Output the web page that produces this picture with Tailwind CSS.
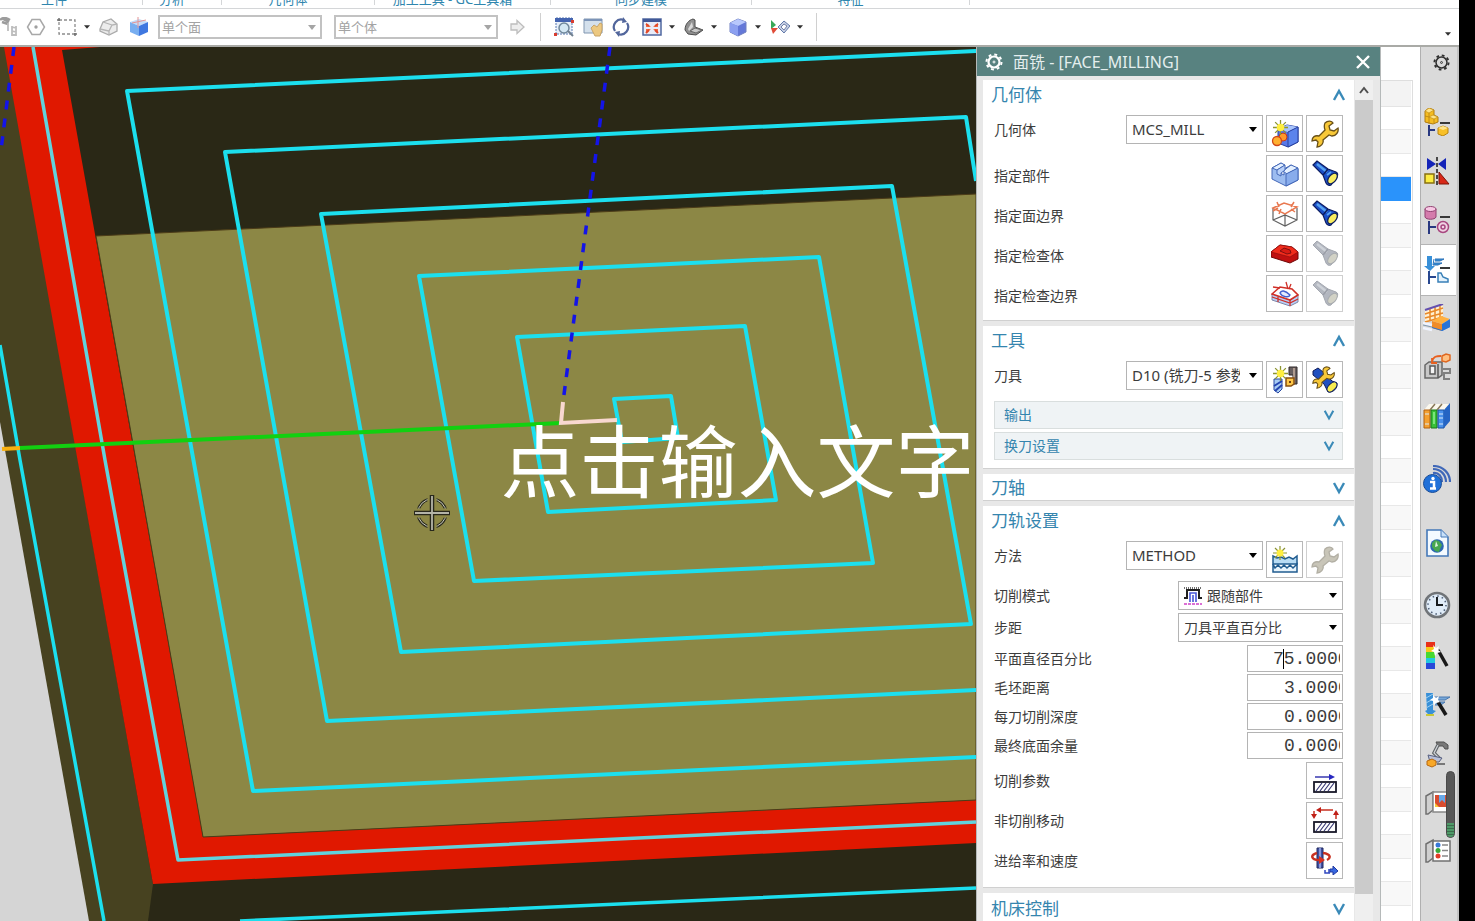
<!DOCTYPE html>
<html lang="zh-CN">
<head>
<meta charset="utf-8">
<title>面铣 - [FACE_MILLING]</title>
<script src="https://cdn.jsdelivr.net/npm/@tailwindcss/browser@4"></script>
</head>
<body class="relative flex h-screen overflow-hidden bg-black pr-4 font-['Noto_Sans','Noto_Sans_CJK_SC',sans-serif] text-sm text-[#3c3c3c]">

<svg class="hidden" aria-hidden="true">
  <symbol id="up" viewBox="0 0 14 14"><path d="M2 12 7 3l5 9" fill="none" stroke="#3a8ab8" stroke-width="2.4"/></symbol>
  <symbol id="down" viewBox="0 0 14 14"><path d="M2 2l5 9 5-9" fill="none" stroke="#3a8ab8" stroke-width="2.4"/></symbol>
  <symbol id="caret" viewBox="0 0 10 6"><path d="M0 0h10L5 6z" fill="currentColor"/></symbol>
  <symbol id="torch" viewBox="0 0 28 28">
    <path d="M2 5 6 1l11 8 8 3c2 1 2 3 1 5l-6 8c-2 1-4 0-5-2l-3-8z" fill="#1c50c8" stroke="#0c1c60" stroke-width="1.200"/>
    <path d="M6 4l10 8" stroke="#58a4f0" stroke-width="2.400"/>
    <path d="M12 15l5-6" stroke="#0c1c60" stroke-width="1.500"/>
    <path d="M16 15l4-3" stroke="#58a4f0" stroke-width="1.800"/>
    <ellipse cx="21.500" cy="18.500" rx="3.600" ry="6.200" transform="rotate(40 21.500 18.500)" fill="#f8ec60" stroke="#10205c" stroke-width="1.300"/>
  </symbol>
  <symbol id="torch-off" viewBox="0 0 28 28">
    <path d="M2 5 6 1l11 8 8 3c2 1 2 3 1 5l-6 8c-2 1-4 0-5-2l-3-8z" fill="#b3b7c0" stroke="#a4a8b0"/>
    <path d="M6 4l10 8" stroke="#ced2d8" stroke-width="2.400"/>
    <path d="M12 15l5-6" stroke="#9a9ea8" stroke-width="1.500"/>
    <ellipse cx="21.500" cy="18.500" rx="3.600" ry="6.200" transform="rotate(40 21.500 18.500)" fill="#d2d2c6" stroke="#a8acb0"/>
  </symbol>
  <symbol id="wrench" viewBox="0 0 28 28">
    <path d="M14 3c3-3 7-2 8 0l-4 3 1 4 4 1 4-3c1 4-2 8-6 8l-3-1-6 5c1 3-2 7-6 7l1-5-2-2-4 1c0-4 3-6 7-5l6-6c-1-3-1-5 0-7z" stroke-width="1.300"/>
  </symbol>
  <symbol id="spark" viewBox="0 0 14 14">
    <path d="M7 0v14M0 7h14M2 2l10 10M12 2 2 12" stroke="#8c9430" stroke-width="1.200"/><circle cx="7" cy="7" r="3.500" fill="#ffee40"/>
  </symbol>
  <symbol id="hatch" viewBox="0 0 24 12">
    <rect x="1" y="1" width="22" height="10" fill="#fff" stroke="#181828" stroke-width="1.800"/>
    <path d="M3 10l6-8M7 10l6-8M11 10l6-8M15 10l6-8" stroke="#3c3c78" stroke-width="1.200"/>
  </symbol>
</svg>

<div class="flex min-w-0 flex-1 flex-col bg-white">

  <!-- Ribbon group captions -->
  <div class="flex h-[9px] shrink-0 items-end overflow-hidden border-b border-[#d4d6d8] pb-[3px] text-[13px] leading-3 text-[#2f86ae]">
    <span class="w-[143px] border-r border-[#d4d6d8] pr-[34px] text-center">工件</span>
    <span class="w-[79px] border-r border-[#d4d6d8] pr-5 text-center">分析</span>
    <span class="w-[153px] border-r border-[#d4d6d8] pr-5 text-center">几何体</span>
    <span class="w-[176px] border-r border-[#d4d6d8] pr-5 text-center">加工工具 - GC工具箱</span>
    <span class="w-[201px] border-r border-[#d4d6d8] pr-5 text-center">同步建模</span>
    <span class="w-[218px] border-r border-[#d4d6d8] pr-5 text-center">特征</span>
  </div>

  <!-- Selection and view toolbar -->
  <div class="flex h-[38px] shrink-0 items-center border-b-2 border-[#a9aaa6] text-[#303030]">
    <button aria-label="装配" class="h-5 w-5"><svg viewBox="0 0 20 20"><path d="M0 3c3-3 7-2 10 0M2 5l6 2M3 2l6 3" fill="none" stroke="#9c9c9c" stroke-width="2.400"/><path d="M8 6v8M12 9v10M16 9v10M12 10l4 1M12 14l4 1M12 18h4" fill="none" stroke="#bdbdbd" stroke-width="1.800"/></svg></button>
    <button aria-label="圆心" class="ml-1.5 h-5 w-5"><svg viewBox="0 0 20 20"><path d="M6 2.500h8l4.500 7.500-4.500 7.500H6L1.500 10z" fill="none" stroke="#a8a8a8" stroke-width="1.500"/><circle cx="10" cy="10" r="1.700" fill="#a0a0a0"/></svg></button>
    <button aria-label="框选" class="ml-[11px] h-5 w-5"><svg viewBox="0 0 20 20"><path d="M2 3h16v14H2z" fill="none" stroke="#8c8c8c" stroke-width="1.300" stroke-dasharray="3 2"/><path d="M0 3h3M17 17h3M2 1v3M18 16v3" stroke="#707070" stroke-width="1.500"/></svg></button>
    <button aria-label="框选选项" class="ml-1 w-3"><svg class="mx-auto h-1 w-1.5"><use href="#caret"/></svg></button>
    <button aria-label="实体" class="ml-1.5 h-5 w-5"><svg viewBox="0 0 20 20"><path d="M1 12l3-7 8-3 6 5v7l-8 4-9-4z" fill="#ececec" stroke="#aaa" stroke-width="1.300"/><path d="M1 12l9 2v4M10 14l3-6 5-1M4 5l9 3" fill="none" stroke="#b4b4b4" stroke-width="1.300"/></svg></button>
    <button aria-label="着色体" class="ml-2.5 h-5 w-5"><svg viewBox="0 0 20 20"><path d="M1 5l9-3 9 3-9 4z" fill="#c4dcf8"/><path d="M1 5l9 4v10l-9-4z" fill="#78aef0"/><path d="M10 9l9-4v10l-9 4z" fill="#3f78e0"/><path d="M9 0v11M3 6l14-3" stroke="#e49494"/></svg></button>
    <div class="relative ml-[9px] w-[164px]">
      <select aria-label="面规则" class="block h-6 w-full appearance-none border-2 border-[#c2c2c2] bg-white pl-0.5 text-[13px] leading-5 text-[#a3a3a3]"><option>单个面</option></select>
      <svg class="pointer-events-none absolute top-2.5 right-1.5 h-[5px] w-2 text-[#a5a5a5]"><use href="#caret"/></svg>
    </div>
    <div class="relative ml-3 w-[164px]">
      <select aria-label="体规则" class="block h-6 w-full appearance-none border-2 border-[#c2c2c2] bg-white pl-0.5 text-[13px] leading-5 text-[#a3a3a3]"><option>单个体</option></select>
      <svg class="pointer-events-none absolute top-2.5 right-1.5 h-[5px] w-2 text-[#a5a5a5]"><use href="#caret"/></svg>
    </div>
    <button aria-label="前进" class="ml-2.5 h-5 w-5"><svg viewBox="0 0 20 20"><path d="M3 7h6V3.500L16 10l-7 6.500V13H3z" fill="#eee" stroke="#bdbdbd" stroke-width="1.300"/></svg></button>
    <div class="ml-3 h-7 w-px bg-[#d0d0d0]"></div>
    <button aria-label="适合窗口" class="ml-[13px] h-5 w-5"><svg viewBox="0 0 20 20"><path d="M2 1h16v16H2z" fill="#e8f0fa" stroke="#5878b0" stroke-dasharray="2 1"/><path d="M1 1h18v4H1z" fill="#4464b0"/><circle cx="10" cy="11" r="5" fill="#d4e8f4" stroke="#70889c" stroke-width="1.500"/><path d="M14 14l5 5" stroke="#708090" stroke-width="2"/><path d="M0 16h3v3H0zM17 3h3v3h-3z" fill="#d83c30"/></svg></button>
    <button aria-label="平移" class="ml-[9px] h-5 w-5"><svg viewBox="0 0 20 20"><path d="M1 2h18v14H1z" fill="#d4e0ec" stroke="#8096b0"/><path d="M1 2h18v2H1z" fill="#7c94b8"/><path d="M8 11l3-3 3 2 3-4 2 1v6l-2 6h-5z" fill="#ecc880" stroke="#c8a468"/></svg></button>
    <button aria-label="旋转" class="ml-2 h-5 w-5"><svg viewBox="0 0 20 20"><path d="M4 14A7.500 7.500 0 0 1 13 3M16 6A7.500 7.500 0 0 1 7 17" fill="none" stroke="#52669c" stroke-width="2.200"/><path d="M12 0l4 5-5 1zM8 20l-4-5 5-1z" fill="#52669c"/></svg></button>
    <button aria-label="视图方位" class="ml-[11px] h-5 w-5"><svg viewBox="0 0 20 20"><path d="M1 2h18v16H1z" fill="#e8ecf8" stroke="#5068a0" stroke-width="1.500"/><path d="M1 2h18v3H1z" fill="#405898"/><path d="M4 6l5 4H4zM16 6l-5 4h5zM4 16l5-4H4zM16 16l-5-4h5z" fill="#f06840"/><path d="M4 7l3 2M16 7l-3 2M4 16l3-3M16 16l-3-3" stroke="#e04828" stroke-width="2"/></svg></button>
    <button aria-label="视图方位选项" class="ml-1 w-3"><svg class="mx-auto h-1 w-1.5"><use href="#caret"/></svg></button>
    <button aria-label="渲染样式" class="ml-1.5 h-5 w-5"><svg viewBox="0 0 20 20"><path d="M1 13C1 7 5 3 9 2l2 1 0 7 8 3-7 5-8-1z" fill="#909090" stroke="#4c4c4c"/><path d="M4 12l4-7 1 5-4 4z" fill="#d8d8d8"/><path d="M6 14l5-3 7 2-6 3z" fill="#c8c8c8" stroke="#686868"/></svg></button>
    <button aria-label="渲染样式选项" class="ml-1 w-3"><svg class="mx-auto h-1 w-1.5"><use href="#caret"/></svg></button>
    <button aria-label="立方体" class="ml-2 h-5 w-5"><svg viewBox="0 0 20 20"><path d="M2 6l8-4 8 3v10l-8 4-8-4z" fill="#6478d8" stroke="#7080c0"/><path d="M2 6l8-4 8 3-8 4z" fill="#b8c8fc"/><path d="M2 6l8 3v10l-8-4z" fill="#8ca0f0"/></svg></button>
    <button aria-label="立方体选项" class="ml-1 w-3"><svg class="mx-auto h-1 w-1.5"><use href="#caret"/></svg></button>
    <button aria-label="移动面" class="ml-1.5 h-5 w-5"><svg viewBox="0 0 20 20"><path d="M1 3l5 5-5 4z" fill="#38a858"/><path d="M1 11h7l-5 6z" fill="#e04c38"/><path d="M8 10l6-6 6 5-6 7z" fill="#c8d0e4" stroke="#6078a8"/><path d="M11 10l3-3 3 2-3 4z" fill="#fff" stroke="#7080a8"/></svg></button>
    <button aria-label="移动面选项" class="ml-1 w-3"><svg class="mx-auto h-1 w-1.5"><use href="#caret"/></svg></button>
    <div class="ml-2.5 h-7 w-px bg-[#d0d0d0]"></div>
    <button aria-label="工具条选项" class="mr-1.5 ml-auto w-2 pt-3.5"><svg class="h-1 w-1.5"><use href="#caret"/></svg></button>
  </div>

  <div class="flex min-h-0 flex-1">

    <!-- Graphics window -->
    <main class="min-w-0 flex-1 overflow-hidden bg-[#2a2816]">
      <svg class="h-full w-full" viewBox="0 47 976 874" preserveAspectRatio="xMinYMin slice">
        <path d="M0 47H5L153 884l-5 37H0z" fill="#474220"/>
        <path d="M0 422 89 921H0z" fill="#d5d5d5"/>
        <path d="M4 47H100L62 50 203 837 976 800v43L153 884z" fill="#e01800"/>
        <path d="M96 236 976 194V800L203 837z" fill="#8c8745" stroke="#4c3c18" stroke-width="1"/>
        <g fill="none" stroke="#1cdfee" stroke-width="4" stroke-linejoin="round">
          <path d="M976 51 127 91 253 791 976 757"/>
          <path d="M976 181 966 117 225 152 327 721 976 690"/>
          <path d="M892 186 321 214 401 652 971 624z"/>
          <path d="M819 257 419 276 474 581 873 563z"/>
          <path d="M745 326 517 337 548 512 776 500z"/>
          <path d="M671 396 614 399 622 442 678 438z"/>
          <path d="M0 345 20 460 104 921M240 921 976 888" stroke-width="3.500"/>
          <path d="M33 47 105 460 178 860 976 822" stroke="#62d2dc" stroke-width="3.500"/>
        </g>
        <path d="M2 449 20 448" stroke="#f8b010" stroke-width="4"/>
        <path d="M20 448 561 423" stroke="#12d010" stroke-width="4"/>
        <path d="M610 47 563 402M14 47 1 150" stroke="#1414e8" stroke-width="3.500" stroke-dasharray="9 9"/>
        <path d="M563 402 561 423 617 420" fill="none" stroke="#f8d8d0" stroke-width="4"/>
        <circle cx="432" cy="513" r="14" fill="none" stroke="#2c2c20" stroke-width="3"/>
        <circle cx="432" cy="513" r="14" fill="none" stroke="#c8c8b8" stroke-width="1"/>
        <path d="M414 513h36M432 495v36" stroke="#8c8745" stroke-width="9"/>
        <path d="M414 513h36M432 495v36" stroke="#28281c" stroke-width="4.500"/>
        <path d="M415 513h34M432 496v34" stroke="#b4b4a8" stroke-width="1.800"/>
      </svg>
    </main>

    <!-- Face milling dialog -->
    <section class="flex w-[405px] shrink-0 flex-col border-x border-[#b5b9b9] bg-[#e8e8e8]" aria-label="面铣">
      <header class="flex h-[29px] shrink-0 items-center bg-[#588280] pr-2.5 pl-2 text-base text-[#e4eeee]">
        <svg class="h-[18px] w-[18px]" viewBox="0 0 18 18" fill="none" stroke="#fff"><circle cx="9" cy="9" r="5.500" stroke-width="2.200"/><circle cx="9" cy="9" r="7.500" stroke-width="2" stroke-dasharray="2.900 3"/><circle cx="9" cy="9" r="1" stroke-width="1"/></svg>
        <h1 class="ml-2.5">面铣 - [FACE_MILLING]</h1>
        <button aria-label="关闭" class="ml-auto"><svg class="h-3.5 w-3.5" viewBox="0 0 14 14"><path d="M1 1l12 12M13 1 1 13" stroke="#fff" stroke-width="2.400"/></svg></button>
      </header>
      <div class="flex min-h-0 flex-1 pt-1 pr-[7px] pl-1.5">
        <div class="flex min-w-0 flex-1 flex-col gap-[5px] overflow-hidden">

          <section class="shrink-0 border-b border-[#d0d0d0] bg-white px-[11px] pb-2">
            <button class="-mx-[3px] mb-[5px] flex h-[30px] w-[355px] items-center justify-between text-[17px] text-[#3585ae]">几何体<svg class="h-3.5 w-3.5"><use href="#up"/></svg></button>
            <div class="flex flex-col gap-[3px]">
              <div class="flex h-[37px] gap-[3px]">
                <label for="geom" class="flex-1 leading-[29px]">几何体</label>
                <div class="relative w-[137px]">
                  <select id="geom" class="block h-[29px] w-full appearance-none border border-[#b4b4b4] bg-white pr-5 pl-[5px] text-[15px]"><option>MCS_MILL</option></select>
                  <svg class="pointer-events-none absolute top-3 right-1.5 h-[5px] w-2 text-black"><use href="#caret"/></svg>
                </div>
                <button aria-label="新建几何体" class="flex w-[37px] items-center justify-center border border-[#b8b8b8] bg-white"><svg class="h-7 w-7" viewBox="0 0 28 28"><path d="M7 9l9-4 11 2v15l-10 5-10-4z" fill="#5878e8" stroke="#2840a0"/><path d="M7 9l9-4 11 2-10 5z" fill="#a8c4fc"/><path d="M17 12l10-5v15l-10 5z" fill="#5c84ec" stroke="#2840a0"/><circle cx="12" cy="17" r="4" fill="#ff9828" stroke="#c83818"/><circle cx="6" cy="21" r="4.500" fill="#ffb030" stroke="#d04818" stroke-width="1.300"/><use href="#spark" x="2" y="0" width="15" height="15"/></svg></button>
                <button aria-label="编辑几何体" class="flex w-[37px] items-center justify-center border border-[#b8b8b8] bg-white"><svg class="h-7 w-7" fill="#f8c838" stroke="#685018"><use href="#wrench"/></svg></button>
              </div>
              <div class="flex h-[37px] items-center gap-[3px]">
                <span class="flex-1 pt-1">指定部件</span>
                <button aria-label="选择部件" class="flex h-full w-[37px] items-center justify-center border border-[#b8b8b8] bg-white"><svg class="h-7 w-7" viewBox="0 0 28 28" stroke="#4468b8" stroke-linejoin="round"><path d="M1 8v11l14 7 12-6V9l-7-4-7 4v6l-4-2V8l4-3-3-2z" fill="#9cbcf0"/><path d="M1 8l9-5 4 2-8 5zM12 11l8-6 7 3-11 6z" fill="#e4f0ff"/><path d="M6 10l8-5v5l-4 3v3l-4-2z" fill="#b8d0f8"/><path d="M15 14v12l12-6V8z" fill="#88acec"/></svg></button>
                <button aria-label="显示部件" class="flex h-full w-[37px] items-center justify-center border border-[#b8b8b8] bg-white"><svg class="h-7 w-7"><use href="#torch"/></svg></button>
              </div>
              <div class="flex h-[37px] items-center gap-[3px]">
                <span class="flex-1 pt-1">指定面边界</span>
                <button aria-label="选择面边界" class="flex h-full w-[37px] items-center justify-center border border-[#b8b8b8] bg-white"><svg class="h-7 w-7" viewBox="0 0 28 28" fill="none"><path d="M2 8v12l12 6 12-6V8M14 14v12M2 20l12-5 12 5" stroke="#606060" stroke-width="1.200"/><path d="M2 8l11-5 13 4-12 7zM6 2l2 5M23 2l-3 5M2 11l5-3M8 14l2-5M24 12l-4-3" stroke="#e87850" stroke-width="1.500"/></svg></button>
                <button aria-label="显示面边界" class="flex h-full w-[37px] items-center justify-center border border-[#b8b8b8] bg-white"><svg class="h-7 w-7"><use href="#torch"/></svg></button>
              </div>
              <div class="flex h-[37px] items-center gap-[3px]">
                <span class="flex-1 pt-1">指定检查体</span>
                <button aria-label="选择检查体" class="flex h-full w-[37px] items-center justify-center border border-[#b8b8b8] bg-white"><svg class="h-7 w-7" viewBox="0 0 28 28"><path d="M0 12l9-7 12 2 6 5v7l-8 4-19-6z" fill="#c01010" stroke="#700808"/><path d="M0 12l9-7 12 2 6 5-8 5z" fill="#f02c1c" stroke="#901010" stroke-width=".7"/><path d="M9 11l4-3 6 2 1 3-4 1z" fill="#d81c14" stroke="#801010"/></svg></button>
                <button disabled aria-label="显示检查体" class="flex h-full w-[37px] items-center justify-center border border-[#cfcfcf] bg-white"><svg class="h-7 w-7"><use href="#torch-off"/></svg></button>
              </div>
              <div class="flex h-[37px] items-center gap-[3px]">
                <span class="flex-1 pt-1">指定检查边界</span>
                <button aria-label="选择检查边界" class="flex h-full w-[37px] items-center justify-center border border-[#b8b8b8] bg-white"><svg class="h-7 w-7" viewBox="0 0 28 28"><path d="M1 14l18 6 8-5v7l-8 4-18-6z" fill="#b8d0f8" stroke="#8088a8"/><path d="M1 14l8-7 12 2 6 6-8 5z" fill="#fff" stroke="#d03028" stroke-width="1.600"/><path d="M2 7l7 1M15 2l2 7M20 4l-2 5M1 17l18 6 8-4M7 22v-5M19 26v-6" stroke="#d03028" stroke-width="1.300" fill="none"/><path d="M9 13c1-3 5-3 10 2-1 3-8 2-10-2z" fill="#e4ecff" stroke="#4460d0" stroke-width="1.400"/></svg></button>
                <button disabled aria-label="显示检查边界" class="flex h-full w-[37px] items-center justify-center border border-[#cfcfcf] bg-white"><svg class="h-7 w-7"><use href="#torch-off"/></svg></button>
              </div>
            </div>
          </section>

          <section class="shrink-0 border-b border-[#d0d0d0] bg-white px-[11px] pb-2">
            <button class="-mx-[3px] mb-[5px] flex h-[30px] w-[355px] items-center justify-between text-[17px] text-[#3585ae]">工具<svg class="h-3.5 w-3.5"><use href="#up"/></svg></button>
            <div class="flex flex-col gap-[3px]">
              <div class="flex h-[37px] gap-[3px]">
                <label for="tool" class="flex-1 leading-[29px]">刀具</label>
                <div class="relative w-[137px]">
                  <select id="tool" class="block h-[29px] w-full appearance-none overflow-hidden border border-[#b4b4b4] bg-white pr-[22px] pl-[5px] text-[15px]"><option>D10 (铣刀-5 参数)</option></select>
                  <svg class="pointer-events-none absolute top-3 right-1.5 h-[5px] w-2 text-black"><use href="#caret"/></svg>
                </div>
                <button aria-label="新建刀具" class="flex w-[37px] items-center justify-center border border-[#b8b8b8] bg-white"><svg class="h-7 w-7" viewBox="0 0 28 28"><path d="M18 1h8v17h-4V9h-4z" fill="#686060" stroke="#302828"/><path d="M23 2v15" stroke="#c8b0a0" stroke-width="1.500"/><path d="M15 12h8v6l-3 2h-5z" fill="#ffc848" stroke="#885010" stroke-width="1.500"/><path d="M18 15h2v2h-2z" fill="#704010"/><path d="M3 13h8v10l-4 4-4-3z" fill="#a8ccf4" stroke="#2848a0"/><path d="M3 20l8-5M4 25l7-6" stroke="#2444b0" stroke-width="2"/><use href="#spark" x="2" y="0" width="15" height="15"/></svg></button>
                <button aria-label="编辑刀具" class="flex w-[37px] items-center justify-center border border-[#b8b8b8] bg-white"><svg class="h-7 w-7" viewBox="0 0 28 28"><path d="M2 5l5-3 5 4 9 9 5 2c1 5-4 10-9 9l-4-8L2 9z" fill="#2050c0" stroke="#101c58"/><ellipse cx="21" cy="21" rx="3.500" ry="6" transform="rotate(45 21 21)" fill="#f8ec50" stroke="#10205c"/><g fill="#f8c838" stroke="#685018"><use href="#wrench" x="1" y="0" width="23" height="23"/></g></svg></button>
              </div>
              <button class="flex h-7 items-center justify-between border border-[#d9dede] bg-[#eff3f5] pr-1.5 pl-[9px] text-[#3585ae]">输出<svg class="h-3 w-3.5"><use href="#down"/></svg></button>
              <button class="flex h-7 items-center justify-between border border-[#d9dede] bg-[#eff3f5] pr-1.5 pl-[9px] text-[#3585ae]">换刀设置<svg class="h-3 w-3.5"><use href="#down"/></svg></button>
            </div>
          </section>

          <section class="shrink-0 border-b border-[#d0d0d0] bg-white px-2">
            <button class="flex h-[26px] w-full items-center justify-between pt-0.5 text-[17px] text-[#3585ae]">刀轴<svg class="h-3.5 w-3.5"><use href="#down"/></svg></button>
          </section>

          <section class="shrink-0 border-b border-[#d0d0d0] bg-white px-[11px] pb-2">
            <button class="-mx-[3px] mb-[5px] flex h-[30px] w-[355px] items-center justify-between text-[17px] text-[#3585ae]">刀轨设置<svg class="h-3.5 w-3.5"><use href="#up"/></svg></button>
            <div class="flex flex-col gap-[3px]">
              <div class="flex h-[37px] gap-[3px]">
                <label for="method" class="flex-1 leading-[29px]">方法</label>
                <div class="relative w-[137px]">
                  <select id="method" class="block h-[29px] w-full appearance-none border border-[#b4b4b4] bg-white pr-5 pl-[5px] text-[15px]"><option>METHOD</option></select>
                  <svg class="pointer-events-none absolute top-3 right-1.5 h-[5px] w-2 text-black"><use href="#caret"/></svg>
                </div>
                <button aria-label="新建方法" class="flex w-[37px] items-center justify-center border border-[#b8b8b8] bg-white"><svg class="h-7 w-7" viewBox="0 0 28 28"><path d="M2 10v8h24v-8l-4 3-4-2-4 2-4-2-4 1z" fill="#b8dcf4" stroke="#205c90" stroke-width="1.500"/><path d="M2 26v-8l2 4 3-3 3 3 3-3 3 3 3-3 3 3 4-4v8z" fill="#e8f4fc" stroke="#205c90" stroke-width="1.500"/><use href="#spark" x="2" y="0" width="14" height="14"/></svg></button>
                <button disabled aria-label="编辑方法" class="flex w-[37px] items-center justify-center border border-[#cfcfcf] bg-white"><svg class="h-7 w-7" fill="#c8c5b8" stroke="#b2afa4"><use href="#wrench"/></svg></button>
              </div>
              <div class="flex h-[29px] items-center">
                <label for="pattern" class="flex-1">切削模式</label>
                <div class="relative w-[165px]">
                  <select id="pattern" class="block h-[29px] w-full appearance-none border border-[#b4b4b4] bg-white pr-5 pl-7 text-sm"><option>跟随部件</option></select>
                  <svg class="pointer-events-none absolute top-1.5 left-1.5 h-[18px] w-[18px]" viewBox="0 0 18 18" fill="none"><path d="M0 1h18" stroke="#707070" stroke-width="2" stroke-dasharray="1 1"/><path d="M0 11h3V3h12v8h3" stroke="#202020" stroke-width="2"/><path d="M6 15V6h6v9M9 15V8" stroke="#4858d8" stroke-width="1.600"/><path d="M0 17h18" stroke="#d040c8" stroke-width="1.500" stroke-dasharray="3 1"/></svg>
                  <svg class="pointer-events-none absolute top-3 right-1.5 h-[5px] w-2 text-black"><use href="#caret"/></svg>
                </div>
              </div>
              <div class="flex h-[29px] items-center">
                <label for="step" class="flex-1">步距</label>
                <div class="relative w-[165px]">
                  <select id="step" class="block h-[29px] w-full appearance-none border border-[#b4b4b4] bg-white pr-5 pl-[5px] text-sm"><option>刀具平直百分比</option></select>
                  <svg class="pointer-events-none absolute top-3 right-1.5 h-[5px] w-2 text-black"><use href="#caret"/></svg>
                </div>
              </div>
              <div class="flex flex-col gap-[2px]">
                <div class="flex h-[27px] items-center">
                  <label for="pct" class="flex-1">平面直径百分比</label>
                  <div class="relative">
                    <input id="pct" value="75.0000" class="block h-[27px] w-24 border border-[#b4b4b4] bg-white pr-0.5 pl-[25px] font-['Liberation_Mono',monospace] text-lg leading-6">
                    <span class="pointer-events-none absolute top-1 left-9 h-5 w-px bg-black"></span>
                  </div>
                </div>
                <div class="flex h-[27px] items-center">
                  <label for="blank" class="flex-1">毛坯距离</label>
                  <input id="blank" value="3.0000" class="block h-[27px] w-24 border border-[#b4b4b4] bg-white pr-0.5 pl-9 font-['Liberation_Mono',monospace] text-lg leading-6">
                </div>
                <div class="flex h-[27px] items-center">
                  <label for="depth" class="flex-1">每刀切削深度</label>
                  <input id="depth" value="0.0000" class="block h-[27px] w-24 border border-[#b4b4b4] bg-white pr-0.5 pl-9 font-['Liberation_Mono',monospace] text-lg leading-6">
                </div>
                <div class="flex h-[27px] items-center">
                  <label for="stock" class="flex-1">最终底面余量</label>
                  <input id="stock" value="0.0000" class="block h-[27px] w-24 border border-[#b4b4b4] bg-white pr-0.5 pl-9 font-['Liberation_Mono',monospace] text-lg leading-6">
                </div>
              </div>
              <div class="flex h-[37px] items-center justify-between">
                <span>切削参数</span>
                <button aria-label="切削参数" class="flex h-full w-[37px] items-center justify-center border border-[#b8b8b8] bg-white"><svg class="h-7 w-7" viewBox="0 0 28 28"><path d="M4 10h16" stroke="#3838b0" stroke-width="1.500"/><path d="M18 7l6 3-6 3z" fill="#2828c0"/><use href="#hatch" x="2" y="14" width="24" height="12"/></svg></button>
              </div>
              <div class="flex h-[37px] items-center justify-between">
                <span>非切削移动</span>
                <button aria-label="非切削移动" class="flex h-full w-[37px] items-center justify-center border border-[#b8b8b8] bg-white"><svg class="h-7 w-7" viewBox="0 0 28 28"><path d="M8 3h14M3 4v5M25 7v5" stroke="#c83020" stroke-width="1.500"/><path d="M10 0v6L5 3zM0 7h6l-3 5zM22 8h6l-3-5z" fill="#c02018"/><use href="#hatch" x="2" y="14" width="24" height="12"/></svg></button>
              </div>
              <div class="flex h-[37px] items-center justify-between">
                <span>进给率和速度</span>
                <button aria-label="进给率和速度" class="flex h-full w-[37px] items-center justify-center border border-[#b8b8b8] bg-white"><svg class="h-7 w-7" viewBox="0 0 28 28"><path d="M6 1h6v20H6z" fill="#4050a0" stroke="#202860"/><path d="M9 1v20" stroke="#a0b0f0" stroke-width="1.500"/><path d="M6 6C-1 8 0 13 8 13M12 6c8 1 8 5 4 7" fill="none" stroke="#c83020" stroke-width="2.500"/><path d="M8 9v8l6-4z" fill="#d83020"/><path d="M14 23v3h5M18 22v4" fill="none" stroke="#3048c0" stroke-width="1.500"/><path d="M19 22h3v-3l5 5-5 4v-3h-3z" fill="#3868e0" stroke="#2038a0"/></svg></button>
              </div>
            </div>
          </section>

          <section class="shrink-0 bg-white px-2 pb-2">
            <button class="flex h-[30px] w-full items-center justify-between pt-0.5 text-[17px] text-[#3585ae]">机床控制<svg class="h-3.5 w-3.5"><use href="#down"/></svg></button>
          </section>
        </div>

        <!-- Dialog scroll bar -->
        <div class="flex w-[19px] shrink-0 flex-col border-l border-[#e8e8e8] bg-[#efefef]">
          <button aria-label="向上滚动" class="flex h-5 shrink-0 items-center justify-center"><svg class="h-2.5 w-2.5" viewBox="0 0 10 10"><path d="M1 8l4-5 4 5" fill="none" stroke="#505050" stroke-width="2"/></svg></button>
          <div class="flex-1 bg-[#cbcbcb]"></div>
          <div class="h-[27px] shrink-0"></div>
        </div>
      </div>
    </section>

    <!-- Edge of the operation navigator behind the dialog -->
    <div class="w-[39px] shrink-0 overflow-hidden bg-white pt-[33px] pr-[7px]">
      <div id="rows" class="border-t border-r border-[#dedede] pr-px">
        <div class="h-[26px] border-b border-[#e4e4e4] bg-[#f3f3f3]"></div>
      </div>
    </div>

    <!-- Resource bar -->
    <nav class="relative flex w-[39px] shrink-0 flex-col border-r-2 border-l border-r-[#c4c4c4] border-l-[#b0b0b0] bg-[#dadada]" aria-label="资源条">
      <button aria-label="设置" class="flex h-[30px] items-center justify-center pl-1"><svg class="h-[17px] w-[17px]" viewBox="0 0 18 18" fill="none" stroke="#303030"><circle cx="9" cy="9" r="5.800" stroke-width="1.600"/><circle cx="9" cy="9" r="7.500" stroke-width="2" stroke-dasharray="2.900 3"/><circle cx="9" cy="9" r="1" stroke-width="1"/></svg></button>
      <button aria-label="装配导航器" class="mt-5 flex h-[49px] items-center pl-0.5"><svg class="h-7 w-7" viewBox="0 0 28 28"><path d="M2 3l4-3 5 2v5l4 2v5l-5 2-8-2z" fill="#f4bc20" stroke="#b07c10"/><path d="M2 3l4-3 5 2-5 3zM6 9l4-2 5 2-4 2z" fill="#ffe488" stroke="#c08c18" stroke-width=".7"/><path d="M2 8l4 1M6 5v11M11 11v4" stroke="#b88410" stroke-width=".8"/><path d="M6 17v11M6 22h6" stroke="#283880" stroke-width="2"/><path d="M17 15h10" stroke="#383838" stroke-width="2"/><path d="M15 20l5-2 5 2v5l-5 3-5-2z" fill="#f8c028" stroke="#b88410"/><path d="M15 20l5-2 5 2-5 2z" fill="#ffe488"/></svg></button>
      <button aria-label="约束导航器" class="flex h-[49px] items-center pl-0.5"><svg class="h-7 w-7" viewBox="0 0 28 28"><path d="M4 1l9 6-9 6zM23 1l-8 6 8 6z" fill="#1424b8"/><path d="M14 0v28" stroke="#181818" stroke-width="1.500" stroke-dasharray="4 2"/><path d="M2 17h9v9H2z" fill="#fcec40" stroke="#887010" stroke-width="1.500"/><path d="M16 15l10 12H16z" fill="#d82818" stroke="#801408"/></svg></button>
      <button aria-label="部件导航器" class="flex h-[49px] items-center pl-0.5"><svg class="h-7 w-7" viewBox="0 0 28 28"><path d="M2 3v8c1 3 10 3 11 0V3z" fill="#d47cac" stroke="#904070"/><ellipse cx="7.500" cy="3" rx="5.500" ry="2.500" fill="#f8c8e4" stroke="#904070"/><path d="M6 15v13M6 21h7" stroke="#283880" stroke-width="2"/><path d="M17 11h10" stroke="#383838" stroke-width="2"/><circle cx="20" cy="21" r="5.500" fill="#f0d4e4" stroke="#a84880" stroke-width="1.500"/><circle cx="20" cy="21" r="2" fill="none" stroke="#a84880" stroke-width="1.500"/></svg></button>
      <button aria-label="工序导航器" aria-current="page" class="mr-px flex h-[52px] items-center border-y border-[#b4b4b4] bg-white pl-0.5"><svg class="h-7 w-7" viewBox="0 0 28 28"><path d="M4 0h5v10h3l-5 5-6-5h3z" fill="#3890d8"/><path d="M12 3h9l-4 2h-5M11 7h8l-4 2h-5M11 3l-1 6" fill="#3890d8" stroke="#2870b8"/><path d="M6 15v13M6 21h7" stroke="#284890" stroke-width="2"/><path d="M17 12h10" stroke="#383838" stroke-width="2"/><path d="M15 17h3l2 4 5 2v3H15z" fill="#e4f2fc" stroke="#3880b8" stroke-width="1.500"/></svg></button>
      <button aria-label="机床导航器" class="-mt-0.5 flex h-12 items-center pl-0.5"><svg class="h-7 w-7" viewBox="0 0 28 28"><path d="M2 7 20 0v13L2 18z" fill="#fff0d0"/><path d="M2 10l18-6M2 14l18-5M7 5v12M12 3v12M17 1v12M2 18l18-5" stroke="#e88828" stroke-width="1.500"/><path d="M2 6 20 0" stroke="#6450b0" stroke-width="2"/><path d="M9 17l9-5 9 3-8 5z" fill="#ffb040"/><path d="M9 17l10 3v7l-10-3z" fill="#f08c28"/><path d="M19 20l8-5v8l-8 4z" fill="#2874d8"/><path d="M9 23l10 3 8-4v1l-8 4-10-3z" fill="#2874d8"/><path d="M0 19l9 2M0 24l9 2" stroke="#f0f4ff" stroke-width="2.500"/><path d="M0 21l9 2" stroke="#8098b0"/></svg></button>
      <button aria-label="加工特征" class="flex h-[49px] items-center pl-0.5"><svg class="h-7 w-7" viewBox="0 0 28 28"><path d="M2 12l4-3h13v13l-4 3H2z" fill="#c8c8c8" stroke="#686868" stroke-width="1.500"/><path d="M7 13h5v8H7zM15 11v14" fill="#f4f4f4" stroke="#585858" stroke-width="1.500"/><path d="M20 16h7v4h-6v6h6" fill="none" stroke="#808080" stroke-width="2"/><path d="M9 9c1-6 5-6 9-6M9 5v5h5" fill="none" stroke="#e86020" stroke-width="1.800"/><path d="M19 3l4-2 4 1v5l-4 2-4-1z" fill="#ffc080" stroke="#e06820" stroke-width="1.500"/></svg></button>
      <button aria-label="重用库" class="flex h-[49px] items-center pl-0.5"><svg class="h-7 w-7" viewBox="0 0 28 28"><path d="M1 8l5-6h21l-6 6z" fill="#fbf8ee"/><path d="M7 8l5-6M14 8l5-6" stroke="#887858" stroke-width="1.500"/><path d="M1 8h6v18H1z" fill="#f4a030" stroke="#b06010"/><path d="M8 8h6v18H8z" fill="#38c038" stroke="#187818"/><path d="M15 8h6v18h-6z" fill="#4890ec" stroke="#1850a0"/><path d="M21 8l6-7v18l-6 7z" fill="#2464c4"/><path d="M2 12h4M2 22h4M16 12h4M16 16h4M16 22h4" stroke="#d8e8f8" stroke-width="1.200"/><path d="M11 10v12" stroke="#90f090" stroke-width="1.500"/></svg></button>
      <button aria-label="HD3D 工具" class="mt-[7px] flex h-16 items-center pl-0.5"><svg class="h-7 w-7" viewBox="0 0 28 28"><path d="M10 8c6-1 9 4 9 9M10 4c8 0 13 6 13 13M10 1c10 0 17 7 17 16" fill="none" stroke="#4068b8" stroke-width="2.200"/><circle cx="9.500" cy="18.500" r="9" fill="#2070d8" stroke="#184c98"/><circle cx="10" cy="13.500" r="1.700" fill="#fff"/><path d="M7 17h4v6M7 23.500h6" stroke="#fff" stroke-width="2.500" fill="none"/></svg></button>
      <button aria-label="Web 浏览器" class="flex h-16 items-center pl-0.5"><svg class="h-7 w-7" viewBox="0 0 28 28"><path d="M4 1h14l7 7v19H4z" fill="#f4faff" stroke="#4478b8" stroke-width="1.600"/><path d="M18 1v7h7" fill="#c8e0f8" stroke="#4478b8"/><circle cx="14" cy="17" r="6.800" fill="#2c68b0"/><path d="M9 14l3-3 4 1 3 4-2 4-1 3-4-1-3-4z" fill="#48a850"/><path d="M13 12l2 5-3 1z" fill="#dff4df"/></svg></button>
      <button aria-label="历史记录" class="flex h-14 items-center pt-1 pl-0.5"><svg class="h-7 w-7" viewBox="0 0 28 28"><circle cx="14" cy="14" r="12" fill="#e0ecf8" stroke="#707478" stroke-width="2.600"/><circle cx="14" cy="14" r="9" fill="none" stroke="#506078" stroke-dasharray="1.500 3.210" stroke-width="1.600"/><path d="M14 6v8h6" fill="none" stroke="#181c20" stroke-width="2"/></svg></button>
      <button aria-label="系统可视化场景" class="flex h-[49px] items-center pl-0.5"><svg class="h-7 w-7" viewBox="0 0 28 28"><path d="M3 0h9v5H3z" fill="#e83018"/><path d="M3 5h9v5H3z" fill="#f8c818"/><path d="M3 10h9v6H3z" fill="#48d830"/><path d="M3 16h9v5H3z" fill="#20c8e0"/><path d="M3 21h9v6H3z" fill="#2848d8"/><path d="M15 8l9 16" stroke="#181818" stroke-width="3.500"/><path d="M10 3l3 3 3-2-1 4 3 2-4 1-2 3-1-4-3-1 3-2z" fill="#fff"/></svg></button>
      <button aria-label="加工向导" class="flex h-[49px] items-center pl-0.5"><svg class="h-7 w-7" viewBox="0 0 28 28"><path d="M3 2h7v17l3 1-6 5-5-5 2-1z" fill="#3890d8"/><path d="M3 7l7-4M3 12l7-4M3 17l7-4" stroke="#a0d0f0"/><path d="M11 6h16l-5 3H12M12 11h10l-4 3h-6" fill="#78a8d8" stroke="#4878b0"/><path d="M3 24h8" stroke="#c8c838" stroke-width="2"/><path d="M15 11l8 13" stroke="#181818" stroke-width="3.500"/><path d="M10 4l3 3 3-2-1 4 2 2-4 1-2 2-1-4-3-1 3-2z" fill="#fff"/></svg></button>
      <button aria-label="机器人" class="flex h-[49px] items-center pl-0.5"><svg class="h-7 w-7" viewBox="0 0 28 28"><path d="M13 2h8l4 3v4h-3l-2-3h-5z" fill="#787878" stroke="#505050"/><path d="M15 5l-4 8 6 6" fill="none" stroke="#606468" stroke-width="3.500"/><path d="M15 5l-4 8 6 6" fill="none" stroke="#d0d4d8" stroke-width="1.200"/><path d="M5 15l14 3-3 4H7z" fill="#b8c0d8" stroke="#586080"/><path d="M4 21l5-2 4 2v4l-4 2-5-2z" fill="#f8a828" stroke="#b86810"/><path d="M14 24h8" stroke="#787878" stroke-width="2"/></svg></button>
      <button aria-label="角色" class="flex h-[49px] items-center pl-0.5"><svg class="h-7 w-7" viewBox="0 0 28 28"><path d="M3 7l7-4v18l-5 4H3z" fill="#d0d0d0" stroke="#707070" stroke-width="1.500"/><path d="M10 3h17v20H10z" fill="#fff" stroke="#888" stroke-width="1.500"/><path d="M12 6h13v12H12z" fill="#d84c30"/><path d="M16 6h6v8l-3-3-3 3z" fill="#68a8e8"/><path d="M12 14l4 4h-4z" fill="#f8c838"/></svg></button>
      <button aria-label="列表" class="flex h-[49px] items-center pl-0.5"><svg class="h-7 w-7" viewBox="0 0 28 28"><path d="M3 6l7-4v18l-5 4H3z" fill="#d0d0d0" stroke="#707070" stroke-width="1.500"/><path d="M10 3h17v20H10z" fill="#fff" stroke="#707070" stroke-width="1.500"/><circle cx="15" cy="7" r="2.500" fill="#3878d8"/><circle cx="15" cy="12.500" r="2.500" fill="#38a838"/><circle cx="15" cy="18" r="2.500" fill="#e03c28"/><path d="M19 7h6M19 12.500h6M19 18h6" stroke="#888" stroke-width="1.500"/></svg></button>
      <div class="absolute top-[724px] right-0.5 flex h-[67px] w-[9px] flex-col justify-end overflow-hidden rounded-full border border-[#4a4a4a] bg-[#585858]"><div class="h-3.5 bg-[repeating-linear-gradient(#4e9a68_0_2px,#3c6c4c_2px_3px)]"></div></div>
    </nav>
  </div>
</div>

<!-- Caption laid over the whole frame -->
<div class="pointer-events-none absolute inset-0 flex items-center justify-center pb-1.5 font-['Noto_Sans_CJK_SC',sans-serif] text-[79px] leading-none whitespace-nowrap text-white">点击输入文字</div>

<script>
  const rows = document.getElementById('rows');
  for (let i = 0; i < 36; i++) {
    const row = document.createElement('div');
    row.className = i === 3 ? 'h-6 bg-[#2a93fb]'
      : i % 2 ? 'h-6 border-b border-[#e8e8e8] bg-[#f8f8f8]'
      : 'h-[23px] border-b border-[#e8e8e8] bg-white';
    rows.append(row);
  }
</script>
</body>
</html>
